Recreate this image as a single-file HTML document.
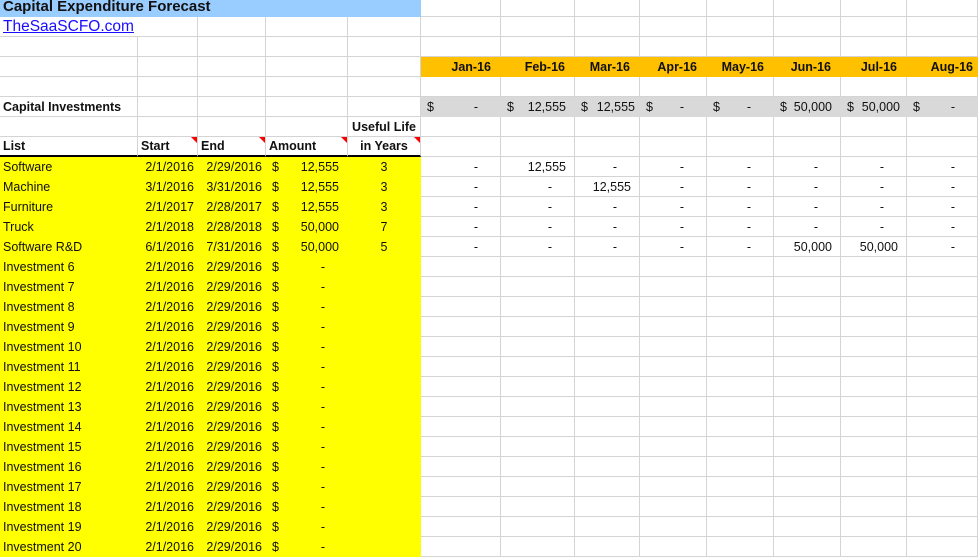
<!DOCTYPE html>
<html><head><meta charset="utf-8">
<style>
html,body{margin:0;padding:0;background:#fff;width:978px;height:550px;overflow:hidden}
table{position:absolute;left:0;top:-3px;border-collapse:separate;border-spacing:0;table-layout:fixed;font-family:"Liberation Sans",Arial,sans-serif;font-size:12.5px;color:#111}
td{box-sizing:border-box;height:20px;padding:0 3px;border-right:1px solid #d4d4d4;border-bottom:1px solid #d4d4d4;white-space:nowrap;overflow:hidden;vertical-align:bottom;line-height:18px;position:relative}
.t{background:#99ccff;font-weight:bold;font-size:15px;border-color:#99ccff;line-height:19px}
.lk{color:#1a0dff;text-decoration:underline;font-size:15.5px}
.o{background:#ffc000;border-color:#ffc000;font-weight:bold;text-align:right;padding-right:9px}
.g{background:#d9d9d9;border-color:#d9d9d9}
.b{font-weight:bold}
.h{font-weight:bold;border-bottom:2px solid #000}
.y{background:#ffff00;border-color:#ffff00}
.r{text-align:right}
.c{text-align:center}
.d{text-align:right;padding-right:22px}
.n{text-align:right;padding-right:8px}
.s{float:left;padding-left:3px}
.tri:after{content:"";position:absolute;right:0;top:0;border-top:6px solid #ff0000;border-left:6px solid transparent}
</style></head><body>
<table>
<colgroup><col style="width:138px"><col style="width:60px"><col style="width:68px"><col style="width:82px"><col style="width:73px"><col style="width:80px"><col style="width:74px"><col style="width:65px"><col style="width:67px"><col style="width:67px"><col style="width:67px"><col style="width:66px"><col style="width:71px"></colgroup>
<tr><td class="t" colspan="5">Capital Expenditure Forecast</td><td></td><td></td><td></td><td></td><td></td><td></td><td></td><td></td></tr>
<tr><td colspan="2"><span class="lk">TheSaaSCFO.com</span></td><td></td><td></td><td></td><td></td><td></td><td></td><td></td><td></td><td></td><td></td><td></td></tr>
<tr><td></td><td></td><td></td><td></td><td></td><td></td><td></td><td></td><td></td><td></td><td></td><td></td><td></td></tr>
<tr><td></td><td></td><td></td><td></td><td></td><td class="o">Jan-16</td><td class="o">Feb-16</td><td class="o">Mar-16</td><td class="o">Apr-16</td><td class="o">May-16</td><td class="o">Jun-16</td><td class="o">Jul-16</td><td class="o" style="padding-right:4px">Aug-16</td></tr>
<tr><td></td><td></td><td></td><td></td><td></td><td></td><td></td><td></td><td></td><td></td><td></td><td></td><td></td></tr>
<tr><td class="b">Capital Investments</td><td></td><td></td><td></td><td></td>
<td class="g d"><span class="s">$</span>-</td><td class="g n"><span class="s">$</span>12,555</td><td class="g n" style="padding-right:4px"><span class="s">$</span>12,555</td><td class="g d"><span class="s">$</span>-</td><td class="g d"><span class="s">$</span>-</td><td class="g n"><span class="s">$</span>50,000</td><td class="g n" style="padding-right:6px"><span class="s">$</span>50,000</td><td class="g d"><span class="s">$</span>-</td></tr>
<tr><td></td><td></td><td></td><td></td><td class="b c">Useful Life</td><td></td><td></td><td></td><td></td><td></td><td></td><td></td><td></td></tr>
<tr><td class="h">List</td><td class="h tri">Start</td><td class="h tri">End</td><td class="h tri">Amount</td><td class="h tri c">in Years</td><td></td><td></td><td></td><td></td><td></td><td></td><td></td><td></td></tr>
<tr><td class="y">Software</td><td class="y r">2/1/2016</td><td class="y r">2/29/2016</td><td class="y n"><span class="s">$</span>12,555</td><td class="y c">3</td><td class="d">-</td><td class="n">12,555</td><td class="d">-</td><td class="d">-</td><td class="d">-</td><td class="d">-</td><td class="d">-</td><td class="d">-</td></tr>
<tr><td class="y">Machine</td><td class="y r">3/1/2016</td><td class="y r">3/31/2016</td><td class="y n"><span class="s">$</span>12,555</td><td class="y c">3</td><td class="d">-</td><td class="d">-</td><td class="n">12,555</td><td class="d">-</td><td class="d">-</td><td class="d">-</td><td class="d">-</td><td class="d">-</td></tr>
<tr><td class="y">Furniture</td><td class="y r">2/1/2017</td><td class="y r">2/28/2017</td><td class="y n"><span class="s">$</span>12,555</td><td class="y c">3</td><td class="d">-</td><td class="d">-</td><td class="d">-</td><td class="d">-</td><td class="d">-</td><td class="d">-</td><td class="d">-</td><td class="d">-</td></tr>
<tr><td class="y">Truck</td><td class="y r">2/1/2018</td><td class="y r">2/28/2018</td><td class="y n"><span class="s">$</span>50,000</td><td class="y c">7</td><td class="d">-</td><td class="d">-</td><td class="d">-</td><td class="d">-</td><td class="d">-</td><td class="d">-</td><td class="d">-</td><td class="d">-</td></tr>
<tr><td class="y">Software R&amp;D</td><td class="y r">6/1/2016</td><td class="y r">7/31/2016</td><td class="y n"><span class="s">$</span>50,000</td><td class="y c">5</td><td class="d">-</td><td class="d">-</td><td class="d">-</td><td class="d">-</td><td class="d">-</td><td class="n">50,000</td><td class="n">50,000</td><td class="d">-</td></tr>
<tr><td class="y">Investment 6</td><td class="y r">2/1/2016</td><td class="y r">2/29/2016</td><td class="y d"><span class="s">$</span>-</td><td class="y"></td><td></td><td></td><td></td><td></td><td></td><td></td><td></td><td></td></tr>
<tr><td class="y">Investment 7</td><td class="y r">2/1/2016</td><td class="y r">2/29/2016</td><td class="y d"><span class="s">$</span>-</td><td class="y"></td><td></td><td></td><td></td><td></td><td></td><td></td><td></td><td></td></tr>
<tr><td class="y">Investment 8</td><td class="y r">2/1/2016</td><td class="y r">2/29/2016</td><td class="y d"><span class="s">$</span>-</td><td class="y"></td><td></td><td></td><td></td><td></td><td></td><td></td><td></td><td></td></tr>
<tr><td class="y">Investment 9</td><td class="y r">2/1/2016</td><td class="y r">2/29/2016</td><td class="y d"><span class="s">$</span>-</td><td class="y"></td><td></td><td></td><td></td><td></td><td></td><td></td><td></td><td></td></tr>
<tr><td class="y">Investment 10</td><td class="y r">2/1/2016</td><td class="y r">2/29/2016</td><td class="y d"><span class="s">$</span>-</td><td class="y"></td><td></td><td></td><td></td><td></td><td></td><td></td><td></td><td></td></tr>
<tr><td class="y">Investment 11</td><td class="y r">2/1/2016</td><td class="y r">2/29/2016</td><td class="y d"><span class="s">$</span>-</td><td class="y"></td><td></td><td></td><td></td><td></td><td></td><td></td><td></td><td></td></tr>
<tr><td class="y">Investment 12</td><td class="y r">2/1/2016</td><td class="y r">2/29/2016</td><td class="y d"><span class="s">$</span>-</td><td class="y"></td><td></td><td></td><td></td><td></td><td></td><td></td><td></td><td></td></tr>
<tr><td class="y">Investment 13</td><td class="y r">2/1/2016</td><td class="y r">2/29/2016</td><td class="y d"><span class="s">$</span>-</td><td class="y"></td><td></td><td></td><td></td><td></td><td></td><td></td><td></td><td></td></tr>
<tr><td class="y">Investment 14</td><td class="y r">2/1/2016</td><td class="y r">2/29/2016</td><td class="y d"><span class="s">$</span>-</td><td class="y"></td><td></td><td></td><td></td><td></td><td></td><td></td><td></td><td></td></tr>
<tr><td class="y">Investment 15</td><td class="y r">2/1/2016</td><td class="y r">2/29/2016</td><td class="y d"><span class="s">$</span>-</td><td class="y"></td><td></td><td></td><td></td><td></td><td></td><td></td><td></td><td></td></tr>
<tr><td class="y">Investment 16</td><td class="y r">2/1/2016</td><td class="y r">2/29/2016</td><td class="y d"><span class="s">$</span>-</td><td class="y"></td><td></td><td></td><td></td><td></td><td></td><td></td><td></td><td></td></tr>
<tr><td class="y">Investment 17</td><td class="y r">2/1/2016</td><td class="y r">2/29/2016</td><td class="y d"><span class="s">$</span>-</td><td class="y"></td><td></td><td></td><td></td><td></td><td></td><td></td><td></td><td></td></tr>
<tr><td class="y">Investment 18</td><td class="y r">2/1/2016</td><td class="y r">2/29/2016</td><td class="y d"><span class="s">$</span>-</td><td class="y"></td><td></td><td></td><td></td><td></td><td></td><td></td><td></td><td></td></tr>
<tr><td class="y">Investment 19</td><td class="y r">2/1/2016</td><td class="y r">2/29/2016</td><td class="y d"><span class="s">$</span>-</td><td class="y"></td><td></td><td></td><td></td><td></td><td></td><td></td><td></td><td></td></tr>
<tr><td class="y">Investment 20</td><td class="y r">2/1/2016</td><td class="y r">2/29/2016</td><td class="y d"><span class="s">$</span>-</td><td class="y"></td><td></td><td></td><td></td><td></td><td></td><td></td><td></td><td></td></tr>
</table>
</body></html>
